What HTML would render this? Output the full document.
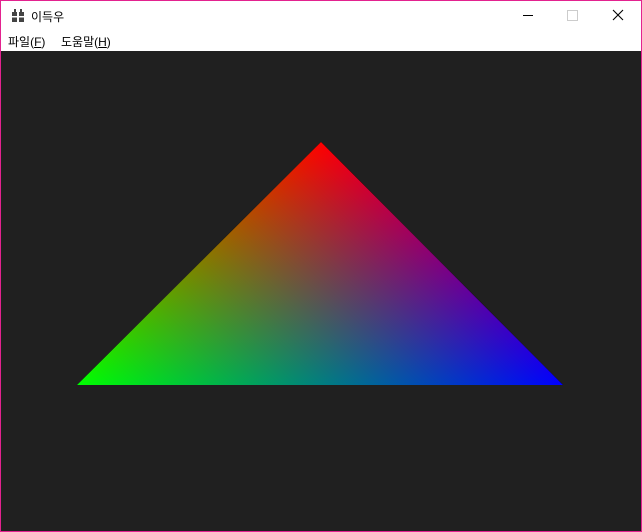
<!DOCTYPE html>
<html><head><meta charset="utf-8"><style>
html,body{margin:0;padding:0;width:642px;height:532px;overflow:hidden;background:#fff}
.win{position:absolute;left:0;top:0;width:640px;height:530px;border:1px solid #e3228f;background:#fff}
.t{position:absolute;font-family:"Liberation Sans","Noto Sans CJK KR",sans-serif;font-size:12px;color:#000}
.dark{position:absolute;left:0;top:50px;width:640px;height:480px;background:#202020}
u{text-decoration:underline}
</style></head><body>
<div class="win">
<svg style="position:absolute;left:10px;top:7px" width="14" height="15" viewBox="0 0 14 15">
<rect x="1" y="4" width="12" height="10" fill="#444"/>
<rect x="3" y="1" width="2" height="3" fill="#444"/><rect x="9" y="1" width="2" height="3" fill="#444"/>
<rect x="6" y="4" width="2" height="10" fill="#fff"/><rect x="1" y="8" width="12" height="1.5" fill="#fff"/>
</svg>
<div class="t" style="left:30px;top:7px">이득우</div>
<div class="t" style="left:7px;top:32px">파일(<u>F</u>)</div>
<div class="t" style="left:60px;top:32px">도움말(<u>H</u>)</div>
<div style="position:absolute;left:522px;top:14px;width:10px;height:1px;background:#000"></div>
<div style="position:absolute;left:566px;top:9px;width:9px;height:9px;border:1px solid #ccc"></div>
<svg style="position:absolute;left:611px;top:8px" width="12" height="12"><path d="M1 1L11 11M11 1L1 11" stroke="#000" stroke-width="1.1"/></svg>
<div class="dark"></div>
<svg style="position:absolute;left:0;top:0" width="640" height="530">
<defs>
<linearGradient id="r" gradientUnits="userSpaceOnUse" x1="320" y1="141" x2="320" y2="384"><stop offset="0" stop-color="#f00"/><stop offset="1" stop-color="#000"/></linearGradient>
<linearGradient id="g" gradientUnits="userSpaceOnUse" x1="76" y1="384" x2="320" y2="141"><stop offset="0" stop-color="#0f0"/><stop offset="1" stop-color="#000"/></linearGradient>
<linearGradient id="b" gradientUnits="userSpaceOnUse" x1="562" y1="384" x2="320" y2="141"><stop offset="0" stop-color="#00f"/><stop offset="1" stop-color="#000"/></linearGradient>
</defs>
<g style="isolation:isolate">
<polygon points="320,141 76,384 562,384" fill="#000"/>
<polygon points="320,141 76,384 562,384" fill="url(#r)" style="mix-blend-mode:plus-lighter"/>
<polygon points="320,141 76,384 562,384" fill="url(#g)" style="mix-blend-mode:plus-lighter"/>
<polygon points="320,141 76,384 562,384" fill="url(#b)" style="mix-blend-mode:plus-lighter"/>
</g>
</svg>
</div>
</body></html>
